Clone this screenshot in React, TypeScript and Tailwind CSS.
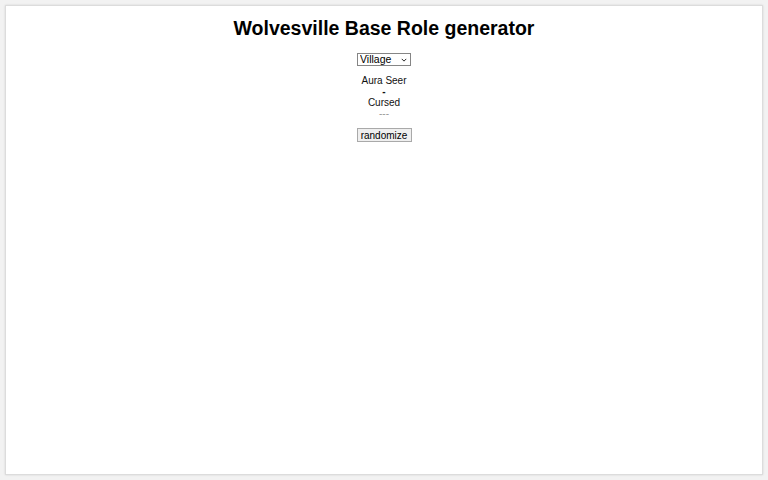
import { useState } from 'react'

const ROLES: Record<string, string[]> = {
    Village: ['Aura Seer', 'Cursed'],
}

export default function App() {
    const [team, setTeam] = useState('Village')
    const [roles, setRoles] = useState(ROLES.Village)

    return (
        <div className="w-[768px] h-[480px] bg-[#f2f2f2] p-[5px] font-['Liberation_Sans',Arial,sans-serif]">
            <div className="h-full bg-white border border-[#dcdcdc] shadow-[0_0_2px_rgba(0,0,0,0.12)] flex flex-col items-center">
                <h1 className="mt-[11px] text-[19.5px] leading-[22px] font-bold text-black">
                    Wolvesville Base Role generator
                </h1>
                <div className="relative mt-[14px] w-[54px] h-[13px]">
                    <select
                        value={team}
                        onChange={e => setTeam(e.target.value)}
                        className="block appearance-none w-full h-full text-[10.5px] leading-[11px] border border-[#858585] bg-white text-black pl-[2px] pr-[10px] py-0"
                    >
                        <option>Village</option>
                        <option>Werewolf</option>
                        <option>Solo</option>
                    </select>
                    <svg
                        viewBox="0 0 8 5"
                        className="absolute right-[4px] top-[5px] w-[6px] h-[4px] pointer-events-none"
                    >
                        <path d="M1 1l3 3 3-3" fill="none" stroke="#222" strokeWidth="1.3" />
                    </svg>
                </div>
                <div className="mt-[9px] flex flex-col items-center text-[10px] leading-[11px] text-[#111]">
                    <span>{roles[0]}</span>
                    <span className="font-bold">-</span>
                    <span>{roles[1]}</span>
                    <span className="text-[#999]">---</span>
                </div>
                <button
                    onClick={() => setRoles([...roles].reverse())}
                    className="mt-[9px] h-[14px] w-[55px] text-[10px] leading-[11px] text-black bg-[#efefef] border border-[#a9a9a9]"
                >
                    randomize
                </button>
            </div>
        </div>
    )
}
